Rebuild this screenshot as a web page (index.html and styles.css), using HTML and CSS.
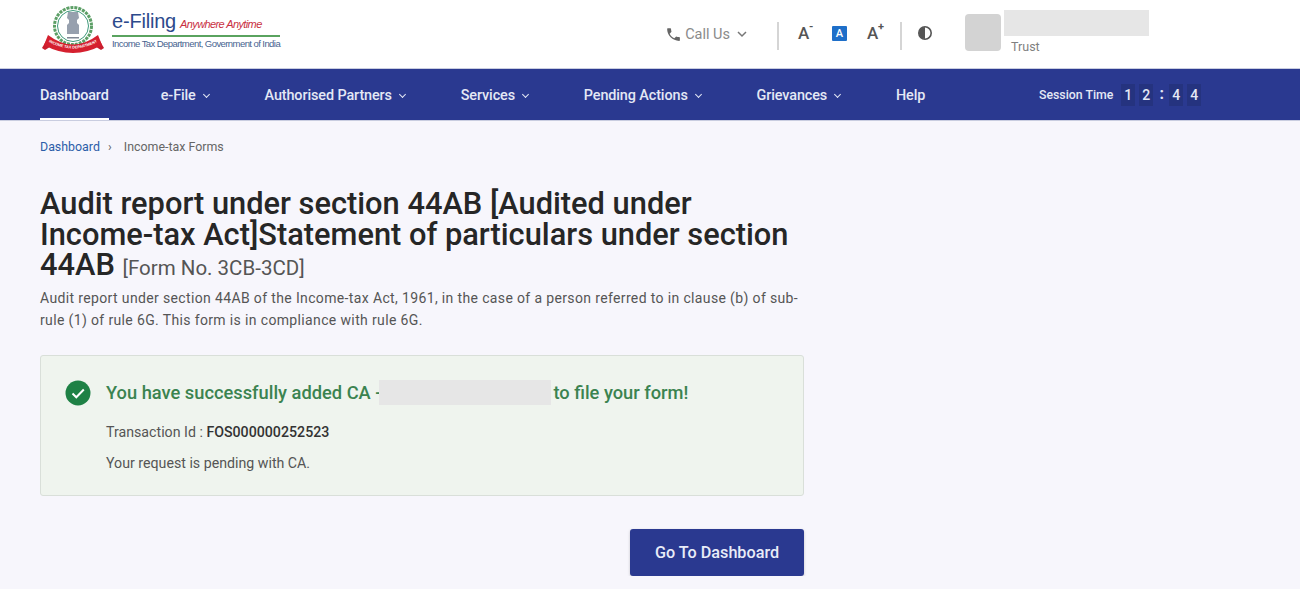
FILE: index.html
```html
<!DOCTYPE html>
<html lang="en">
<head>
    <meta charset="UTF-8">
    <meta name="viewport" content="width=device-width, initial-scale=1.0">
    <title>Income-tax Forms</title>
    <link rel="stylesheet" href="styles.css">
</head>
<body>

    <!-- Header -->
    <header class="top-bar">
        <a href="#" class="logo">
            <svg class="emblem" width="68" height="48" viewBox="0 0 68 48">
                <!-- wreath -->
                <circle cx="34" cy="20" r="18.500" fill="none" stroke="#5c9f66" stroke-width="3" stroke-dasharray="3 1"/>
                <circle cx="34" cy="20" r="15.500" fill="#fff" stroke="#3f9a7c" stroke-width="1"/>
                <!-- national emblem -->
                <path d="M29 6h10l1 6-2 2v3l2 2v9h-12v-9l2-2v-3l-2-2z" fill="#97a0ae"/>
                <rect x="28" y="31" width="12" height="1.500" fill="#7f8794"/>
                <!-- ribbon -->
                <path d="M3 42 L10 30 L14 39 L6 44 Z" fill="#c81e2e"/>
                <path d="M65 42 L58 30 L54 39 L62 44 Z" fill="#c81e2e"/>
                <path d="M9 29 Q34 48 59 29 L63 39 Q34 55 5 39 Z" fill="#d5202f"/>
                <path id="ribbon-line" d="M8 35 Q34 50 60 35" fill="none"/>
                <text class="ribbon-text"><textPath href="#ribbon-line" startOffset="50%" text-anchor="middle">INCOME TAX DEPARTMENT</textPath></text>
            </svg>
            <div class="logo-text">
                <div class="logo-top">
                    <span class="logo-name">e-Filing</span>
                    <span class="logo-tag">Anywhere Anytime</span>
                </div>
                <div class="logo-dept">Income Tax Department, Government of India</div>
            </div>
        </a>
        <div class="top-tools">
            <div class="call-us">
                <svg width="17" height="17" viewBox="0 0 24 24"><path fill="#666" d="M6.600 10.800c1.400 2.800 3.800 5.100 6.600 6.600l2.200-2.200c.3-.3.700-.4 1-.2 1.100.4 2.300.6 3.600.6.600 0 1 .4 1 1V20c0 .6-.4 1-1 1C10.600 21 3 13.400 3 4c0-.6.400-1 1-1h3.500c.6 0 1 .4 1 1 0 1.300.2 2.500.6 3.600.1.300 0 .7-.2 1z"/></svg>
                <span>Call Us</span>
                <svg width="12" height="12" viewBox="0 0 12 12"><path d="M2 4l4 4 4-4" fill="none" stroke="#777" stroke-width="1.500"/></svg>
            </div>
            <div class="divider"></div>
            <div class="font-tools">
                <span class="font-btn">A<sup>-</sup></span>
                <span class="font-btn active">A</span>
                <span class="font-btn">A<sup>+</sup></span>
            </div>
            <div class="divider"></div>
            <svg class="contrast" width="16" height="16" viewBox="0 0 16 16">
                <circle cx="8" cy="8" r="6.200" fill="#fff" stroke="#555" stroke-width="1.600"/>
                <path d="M8 2a6 6 0 0 0 0 12z" fill="#555"/>
            </svg>
            <div class="user-box">
                <div class="avatar"></div>
                <div class="user-info">
                    <div class="user-name"></div>
                    <div class="user-role">Trust</div>
                </div>
            </div>
        </div>
    </header>

    <!-- Nav -->
    <nav class="nav-bar">
        <a href="#" class="nav-item current">Dashboard</a>
        <a href="#" class="nav-item drop">e-File</a>
        <a href="#" class="nav-item drop">Authorised Partners</a>
        <a href="#" class="nav-item drop">Services</a>
        <a href="#" class="nav-item drop">Pending Actions</a>
        <a href="#" class="nav-item drop">Grievances</a>
        <a href="#" class="nav-item">Help</a>
        <div class="session">
            <span class="session-label">Session Time</span>
            <span class="digit">1</span>
            <span class="digit">2</span>
            <span class="colon">:</span>
            <span class="digit">4</span>
            <span class="digit">4</span>
        </div>
    </nav>

    <!-- Main -->
    <main class="content">
        <div class="breadcrumb">
            <a href="#">Dashboard</a>
            <span class="sep">›</span>
            <span>Income-tax Forms</span>
        </div>

        <h1 class="page-title">Audit report under section 44AB [Audited under<br>Income-tax Act]Statement of particulars under section<br>44AB <span class="form-no">[Form No. 3CB-3CD]</span></h1>
        <p class="page-desc">Audit report under section 44AB of the Income-tax Act, 1961, in the case of a person referred to in clause (b) of sub-rule (1) of rule 6G. This form is in compliance with rule 6G.</p>

        <div class="success-box">
            <div class="success-head">
                <svg width="26" height="26" viewBox="0 0 26 26">
                    <circle cx="13" cy="13" r="12.500" fill="#1e8145"/>
                    <path d="M7.500 13.500l3.800 3.800 7.500-7.800" fill="none" stroke="#fff" stroke-width="2"/>
                </svg>
                <span>You have successfully added CA -</span>
                <span class="masked"></span>
                <span>to file your form!</span>
            </div>
            <div class="success-line">Transaction Id : <b>FOS000000252523</b></div>
            <div class="success-line">Your request is pending with CA.</div>
        </div>

        <div class="actions">
            <button class="primary-btn">Go To Dashboard</button>
        </div>
    </main>

</body>
</html>
```

FILE: styles.css
```css
body {
    font-family: Roboto, Arial, sans-serif;
    margin: 0;
    padding: 0;
    background-color: #f7f6fc;
    color: #333;
    overflow: hidden;
}

a {
    text-decoration: none;
}

/* Header */
.top-bar {
    background-color: #fff;
    height: 68px;
    display: flex;
    align-items: center;
    justify-content: space-between;
    padding: 0 151px 0 39px;
    border-bottom: 1px solid #c9cde0;
}

.logo {
    display: flex;
    align-items: flex-start;
    gap: 5px;
    margin-top: -8px;
}

.ribbon-text {
    font-family: "Liberation Sans", sans-serif;
    font-size: 3.800px;
    font-weight: bold;
    fill: #fff;
}

.logo-text {
    width: 168px;
    padding-top: 4px;
}

.logo-top {
    display: flex;
    align-items: baseline;
    gap: 4px;
    border-bottom: 2px solid #5aa35f;
    height: 25px;
    margin-bottom: 1px;
}

.logo-name {
    font-family: "Liberation Sans", sans-serif;
    font-size: 20px;
    color: #2c4a8c;
    letter-spacing: -0.2px;
}

.logo-tag {
    font-family: "Liberation Sans", sans-serif;
    font-size: 11px;
    font-style: italic;
    color: #c9303f;
    letter-spacing: -0.6px;
}

.logo-dept {
    font-family: "Liberation Sans", sans-serif;
    font-size: 9.500px;
    color: #47638f;
    letter-spacing: -0.57px;
    white-space: nowrap;
}

.top-tools {
    display: flex;
    align-items: center;
    margin-top: -2px;
}

.call-us {
    display: flex;
    align-items: center;
    gap: 3px;
    color: #8a8a8a;
    font-size: 14.500px;
    margin: 2px 29px 0 0;
}

.call-us span {
    margin-right: 3px;
}

.divider {
    width: 2px;
    height: 28px;
    background-color: #d5d5d5;
    margin-top: 6px;
}

.font-tools {
    display: flex;
    align-items: center;
    gap: 18px;
    margin: 0 16px 0 19px;
}

.font-btn {
    width: 17px;
    height: 16px;
    line-height: 16px;
    font-size: 17px;
    font-weight: 500;
    color: #555;
    position: relative;
}

.font-btn:first-child {
    width: 16px;
}

.font-btn sup {
    position: absolute;
    top: -5px;
    left: 11px;
    font-size: 11px;
    font-weight: 700;
    line-height: 14px;
}

.font-btn.active {
    width: 15px;
    height: 15px;
    line-height: 15px;
    font-size: 11px;
    text-align: center;
    background-color: #1e6fc9;
    color: #fff;
    border-radius: 1px;
    margin-right: 2px;
}

.contrast {
    margin-left: 15px;
}

.user-box {
    display: flex;
    margin: -3px 0 0 32px;
    width: 184px;
}

.avatar {
    width: 37px;
    height: 37px;
    background-color: #d3d3d3;
    border-radius: 4px;
    margin-top: 4px;
}

.user-info {
    margin-left: 3px;
}

.user-name {
    width: 145px;
    height: 26px;
    background-color: #e6e6e6;
}

.user-role {
    font-size: 12.500px;
    color: #808080;
    margin: 3px 0 0 7px;
}

/* Nav */
.nav-bar {
    background-color: #2a3990;
    height: 51px;
    display: flex;
    align-items: center;
    padding-left: 40px;
    border-bottom: 1px solid #c9cde0;
}

.nav-item {
    color: #e4e8f5;
    font-size: 14.400px;
    font-weight: 500;
    line-height: 49px;
    padding-top: 2px;
    margin-right: 54.800px;
    white-space: nowrap;
    letter-spacing: -0.1px;
}

.nav-item.current {
    color: #e8ecf8;
    margin-right: 52px;
    box-shadow: inset 0 -2px 0 #fff;
}

.nav-item.drop::after {
    content: "";
    display: inline-block;
    width: 4px;
    height: 4px;
    margin: 0 1px 3px 8px;
    border-right: 1.500px solid #e4e8f5;
    border-bottom: 1.500px solid #e4e8f5;
    transform: rotate(45deg);
}

.session {
    display: flex;
    align-items: center;
    margin-left: 59px;
    color: #e4e8f5;
    font-weight: 500;
}

.session-label {
    font-size: 12.300px;
    margin-right: 8px;
}

.digit {
    width: 14px;
    height: 22px;
    line-height: 22px;
    text-align: center;
    background-color: #25337f;
    font-size: 14px;
    margin-right: 4px;
}

.colon {
    width: 11px;
    font-size: 16px;
    font-weight: 700;
    text-align: center;
    margin: -3px 2px 0 -1px;
}

/* Main */
.content {
    width: 764px;
    padding: 0 0 0 40px;
}

.breadcrumb {
    font-size: 12.400px;
    color: #666;
    padding-top: 19px;
    line-height: 14px;
}

.breadcrumb a {
    color: #2c5da8;
}

.breadcrumb .sep {
    margin: 0 9px 0 5px;
}

.page-title {
    font-size: 30.800px;
    font-weight: 500;
    line-height: 30.500px;
    color: #262626;
    margin: 35px 0 0;
}

.form-no {
    font-size: 20.500px;
    font-weight: 400;
    color: #555;
}

.page-desc {
    font-size: 14px;
    line-height: 22px;
    letter-spacing: 0.36px;
    color: #555;
    margin: 3px 0 0;
}

.success-box {
    background-color: #eff4ee;
    border: 1px solid #d9dfd9;
    border-radius: 3px;
    height: 139px;
    margin-top: 24px;
    padding: 0 0 0 24px;
}

.success-head {
    display: flex;
    align-items: center;
    font-size: 18.300px;
    font-weight: 500;
    color: #3b8350;
    padding-top: 24px;
    height: 26px;
    margin-bottom: 18px;
}

.success-head svg {
    margin-right: 15px;
}

.masked {
    width: 172px;
    height: 25px;
    background-color: #e6e6e6;
    margin: 0 2px 0 -2px;
}

.success-line {
    font-size: 14.200px;
    color: #555;
    margin-left: 41px;
    line-height: 16px;
    margin-top: 15px;
}

.success-line b {
    font-weight: 500;
    color: #333;
}

.actions {
    display: flex;
    justify-content: flex-end;
    margin-top: 33px;
}

.primary-btn {
    background-color: #2a3990;
    color: #e8ecf8;
    border: none;
    border-radius: 3px;
    width: 174px;
    height: 47px;
    font-family: Roboto, Arial, sans-serif;
    font-size: 16.200px;
    font-weight: 500;
    box-shadow: 0 1px 3px rgba(0, 0, 0, 0.2);
}
```
